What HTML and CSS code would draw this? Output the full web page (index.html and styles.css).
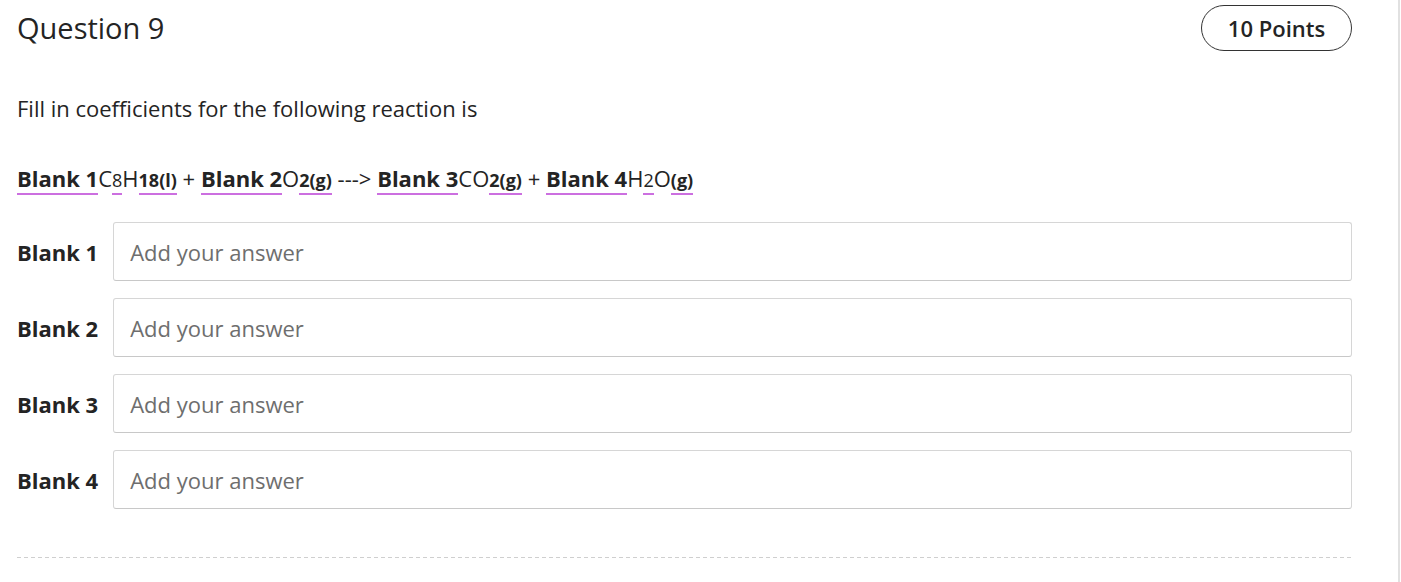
FILE: index.html
```html
<!DOCTYPE html>
<html>
<head>
<meta charset="utf-8">
<link rel="stylesheet" href="styles.css">
</head>
<body>
<div class="page">
  <div class="question">
    <div class="header">
      <h2 class="title">Question 9</h2>
      <span class="points">10 Points</span>
    </div>
    <p class="prompt">Fill in coefficients for the following reaction is</p>
    <p class="equation"><b class="mark">Blank 1</b>C<span class="sub mark n">8</span>H<span class="sub mark">18</span><span class="sub mark">(l)</span> + <b class="mark">Blank 2</b>O<span class="sub mark">2</span><span class="sub mark">(g)</span> ---&gt; <b class="mark">Blank 3</b>CO<span class="sub mark">2</span><span class="sub mark">(g)</span> + <b class="mark">Blank 4</b>H<span class="sub mark n">2</span>O<span class="sub mark">(g)</span></p>
    <div class="blanks">
      <label class="label">Blank 1</label><div class="field">Add your answer</div>
      <label class="label">Blank 2</label><div class="field">Add your answer</div>
      <label class="label">Blank 3</label><div class="field">Add your answer</div>
      <label class="label">Blank 4</label><div class="field">Add your answer</div>
    </div>
    <div class="divider"></div>
  </div>
</div>
</body>
</html>
```
FILE: styles.css
```css
html, body {
  margin: 0;
  padding: 0;
  background: #fff;
}
body {
  font-family: "Open Sans", "Noto Sans", sans-serif;
  color: #242424;
}
.page {
  width: 1398px;
  height: 582px;
  border-right: 2px solid #e1e1e1;
  box-sizing: content-box;
  overflow: hidden;
}
.question {
  width: 1335px;
  margin-left: 17px;
}
.header {
  display: flex;
  justify-content: space-between;
  align-items: flex-start;
  height: 52px;
}
.title {
  margin: 8px 0 0 0;
  font-size: 29px;
  font-weight: 500;
  line-height: 40px;
  color: #242424;
}
.points {
  margin-top: 5px;
  display: flex;
  align-items: center;
  justify-content: center;
  box-sizing: border-box;
  width: 151px;
  height: 46px;
  border: 1px solid #333;
  border-radius: 23px;
  font-size: 22px;
  font-weight: 600;
  color: #242424;
}
.prompt {
  margin: 41px 0 0 0;
  font-size: 22px;
  line-height: 30px;
}
.equation {
  margin: 40px 0 0 0;
  font-size: 22px;
  line-height: 30px;
}
.equation b {
  font-weight: 700;
}
.mark {
  border-bottom: 2px solid #cc6fe0;
}
.sub {
  font-size: 18px;
  font-weight: 700;
  padding-bottom: 1px;
}
.sub.n {
  font-weight: 400;
}
.blanks {
  margin-top: 27px;
  display: grid;
  grid-template-columns: auto 1fr;
  column-gap: 15px;
  row-gap: 17px;
  align-items: center;
}
.label {
  font-size: 22px;
  font-weight: 700;
}
.field {
  box-sizing: border-box;
  height: 59px;
  border: 1px solid #d6d6d6;
  border-bottom-color: #c8c8c8;
  border-radius: 3px;
  padding: 0 16px;
  display: flex;
  align-items: center;
  font-size: 22px;
  color: #6e6e6e;
}
.divider {
  margin-top: 48px;
  height: 1px;
  background: repeating-linear-gradient(to right, #cfcfcf 0 4px, transparent 4px 7px);
}
```
